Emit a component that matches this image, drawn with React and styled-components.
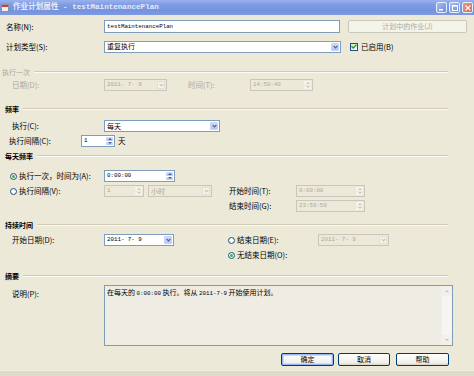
import React from 'react'
import styled, { createGlobalStyle, css } from 'styled-components'

const GlobalStyle = createGlobalStyle`
  html, body { margin: 0; padding: 0; }
  body {
    background: #ece9d8;
    font-family: "Noto Sans CJK SC", "Liberation Sans", sans-serif;
    font-size: 7.5px;
    line-height: 1;
    color: #000;
  }
`

const Window = styled.div`
  width: 474px;
  height: 376px;
  display: flex;
  flex-direction: column;
  overflow: hidden;
  background: #ece9d8;
`

const TitleBar = styled.div`
  height: 15px;
  flex: none;
  display: flex;
  align-items: center;
  background: linear-gradient(#9ab2ee 0%, #7f9de3 30%, #7593de 70%, #7e9ae0 100%);
`

const TitleText = styled.div`
  margin-left: 4px;
  font-family: "Liberation Mono", "Noto Sans CJK SC", monospace;
  font-weight: bold;
  font-size: 7.6px;
  color: #e4ebfa;
  white-space: pre;
`

const CaptionGroup = styled.div`
  margin-left: auto;
  margin-right: 1px;
  display: flex;
  gap: 2px;
`

const CaptionButton = styled.div`
  width: 11px;
  height: 11px;
  box-sizing: border-box;
  border: 1px solid #e8eefc;
  border-radius: 2px;
  display: flex;
  align-items: center;
  justify-content: center;
  background: ${p => p.$close
    ? 'linear-gradient(135deg, #e89a86, #d5684e)'
    : 'linear-gradient(135deg, #a6bdf3, #6b8ce0)'};
`

const Body = styled.div`
  flex: 1;
  display: flex;
  flex-direction: column;
  position: relative;
`

const Row = styled.div`
  display: flex;
  align-items: center;
  margin-top: ${p => p.$mt}px;
  height: ${p => p.$h || 12}px;
  ${p => p.$ml && css`padding-left: ${p.$ml}px;`}
`

const Label = styled.span`
  flex: none;
  width: ${p => p.$w}px;
  margin-left: ${p => p.$ml || 0}px;
  color: ${p => (p.$disabled ? '#aca899' : '#000')};
  white-space: nowrap;
  ${p => p.$top && css`align-self: flex-start; padding-top: 5px;`}
`

const Field = styled.div`
  flex: none;
  box-sizing: border-box;
  width: ${p => p.$w}px;
  height: ${p => p.$h || 12}px;
  margin-left: ${p => p.$ml || 0}px;
  border: 1px solid ${p => (p.$disabled ? '#c9c7ba' : '#7f9db9')};
  background: ${p => (p.$disabled ? '#ece9d8' : '#fff')};
  color: ${p => (p.$disabled ? '#aca899' : '#000')};
  display: flex;
  align-items: center;
  padding-left: 2px;
  font-size: 7px;
  white-space: nowrap;
  overflow: hidden;
`

const FieldText = styled.span`
  flex: 1;
  ${p => p.$mono && css`font-family: "Liberation Mono", monospace; font-size: 5.8px;`}
`

const ArrowButton = styled.div`
  flex: none;
  align-self: stretch;
  width: 8px;
  margin: 1px;
  border-radius: 1px;
  display: flex;
  align-items: center;
  justify-content: center;
  background: ${p => (p.$disabled ? '#f4f3ee' : 'linear-gradient(#d2ddfa, #b3c7f6)')};
  border: 1px solid ${p => (p.$disabled ? '#e2e0d6' : '#c3d3fd')};
  box-sizing: border-box;
`

const SpinButtons = styled.div`
  flex: none;
  align-self: stretch;
  width: 7px;
  margin: 1px;
  display: flex;
  flex-direction: column;
  gap: 1px;
`

const SpinHalf = styled.div`
  flex: 1;
  display: flex;
  align-items: center;
  justify-content: center;
  border-radius: 1px;
  background: ${p => (p.$disabled ? '#f4f3ee' : 'linear-gradient(#d2ddfa, #b3c7f6)')};
`

const Header = styled.div`
  display: flex;
  align-items: center;
  width: 448px;
  height: 10px;
  margin-top: ${p => p.$mt}px;
  padding-left: ${p => p.$pl || 5}px;
  box-sizing: border-box;
`

const HeaderText = styled.span`
  font-weight: ${p => (p.$disabled ? 'normal' : 'bold')};
  color: ${p => (p.$disabled ? '#aca899' : '#000')};
  font-size: 7px;
`

const Rule = styled.div`
  flex: 1;
  margin-left: 4px;
  height: 0;
  border-top: 1px solid #d0ccb8;
  border-bottom: 1px solid #fbfaf5;
`

const Check = styled.div`
  flex: none;
  width: 8px;
  height: 8px;
  margin-left: ${p => p.$ml || 0}px;
  box-sizing: border-box;
  border: 1px solid #1c5180;
  background: linear-gradient(135deg, #dcdcd6, #fff);
  display: flex;
  align-items: center;
  justify-content: center;
`

const RadioBox = styled.div`
  flex: none;
  width: ${p => p.$w}px;
  margin-left: ${p => p.$ml || 0}px;
  display: flex;
  align-items: center;
  gap: 2px;
  white-space: nowrap;
`

const RadioDot = styled.div`
  flex: none;
  width: 7px;
  height: 7px;
  border-radius: 50%;
  box-sizing: border-box;
  border: 1px solid #1c5180;
  background: radial-gradient(#fff 40%, #e2e1d9);
  display: flex;
  align-items: center;
  justify-content: center;
  &::after {
    content: "";
    display: ${p => (p.$checked ? 'block' : 'none')};
    width: 3px;
    height: 3px;
    border-radius: 50%;
    background: #3fb03a;
  }
`

const TextArea = styled.div`
  flex: none;
  box-sizing: border-box;
  width: 349px;
  height: 61px;
  border: 1px solid #7f9db9;
  background: #efede3;
  display: flex;
  font-size: 7px;
`

const AreaText = styled.div`
  flex: 1;
  padding: 3px 2px;
  white-space: nowrap;
`

const ScrollBar = styled.div`
  flex: none;
  width: 10px;
  display: flex;
  flex-direction: column;
  justify-content: space-between;
  background: #f6f5f0;
  border-left: 1px solid #f0efe9;
`

const ScrollArrow = styled.div`
  height: 10px;
  display: flex;
  align-items: center;
  justify-content: center;
  background: #f1f0ea;
`

const ButtonRow = styled.div`
  display: flex;
  align-items: center;
  margin-top: 7px;
  height: 13px;
  padding-left: 281px;
`

const Button = styled.div`
  flex: none;
  box-sizing: border-box;
  width: ${p => p.$w}px;
  height: ${p => p.$h || 13}px;
  margin-left: ${p => p.$ml || 0}px;
  display: flex;
  align-items: center;
  justify-content: center;
  border-radius: 2px;
  font-size: 7px;
  border: 1px solid ${p => (p.$disabled ? '#cac8bb' : '#003c74')};
  color: ${p => (p.$disabled ? '#aca899' : '#000')};
  background: ${p => (p.$disabled ? '#f5f4ea' : 'linear-gradient(#fff, #f1f0ea 80%, #d6d0c5)')};
  ${p => p.$default && css`box-shadow: inset 0 0 0 1px #99b8f3, inset 0 0 0 2px #cedcfa;`}
`

const StatusStrip = styled.div`
  margin-top: auto;
  height: 5px;
  background: #dedbcb;
  border-top: 1px solid #f2f0e6;
`

function Chevron({ disabled }) {
  return (
    <svg width="5" height="4" viewBox="0 0 5 4">
      <path d="M0.6 0.8 L2.5 2.8 L4.4 0.8" fill="none" stroke={disabled ? '#c9c7ba' : '#4d6185'} strokeWidth="1.2" />
    </svg>
  )
}

function Tri({ up, disabled }) {
  return (
    <svg width="4" height="2" viewBox="0 0 4 2">
      <path d={up ? 'M0 2 L2 0 L4 2 Z' : 'M0 0 L2 2 L4 0 Z'} fill={disabled ? '#c9c7ba' : '#4d6185'} />
    </svg>
  )
}

function Combo({ w, ml, disabled, value, mono }) {
  return (
    <Field $w={w} $ml={ml} $disabled={disabled}>
      <FieldText $mono={mono}>{value}</FieldText>
      <ArrowButton $disabled={disabled}><Chevron disabled={disabled} /></ArrowButton>
    </Field>
  )
}

function Spin({ w, ml, disabled, value, mono }) {
  return (
    <Field $w={w} $ml={ml} $disabled={disabled}>
      <FieldText $mono={mono}>{value}</FieldText>
      <SpinButtons>
        <SpinHalf $disabled={disabled}><Tri up disabled={disabled} /></SpinHalf>
        <SpinHalf $disabled={disabled}><Tri disabled={disabled} /></SpinHalf>
      </SpinButtons>
    </Field>
  )
}

function Radio({ w, ml, checked, children }) {
  return (
    <RadioBox $w={w} $ml={ml}>
      <RadioDot $checked={checked} />
      <span>{children}</span>
    </RadioBox>
  )
}

function Section({ mt, pl, disabled, title }) {
  return (
    <Header $mt={mt} $pl={pl}>
      <HeaderText $disabled={disabled}>{title}</HeaderText>
      <Rule />
    </Header>
  )
}

function AppIcon() {
  return (
    <svg width="8" height="8" viewBox="0 0 8 8" style={{ marginLeft: 1 }}>
      <rect x="0.5" y="0.5" width="7" height="7" fill="#f3f1e8" stroke="#8b8fa6" />
      <rect x="1" y="1" width="6" height="2" fill="#c0462f" />
    </svg>
  )
}

export default function App() {
  return (
    <Window>
      <GlobalStyle />
      <TitleBar>
        <AppIcon />
        <TitleText>作业计划属性 - testMaintenancePlan</TitleText>
        <CaptionGroup>
          <CaptionButton>
            <svg width="5" height="6" viewBox="0 0 5 6"><rect x="0" y="4" width="4" height="1.5" fill="#fff" /></svg>
          </CaptionButton>
          <CaptionButton>
            <svg width="6" height="6" viewBox="0 0 6 6"><rect x="0.5" y="0.5" width="5" height="5" fill="none" stroke="#fff" /><rect x="0" y="0" width="6" height="1.6" fill="#fff" /></svg>
          </CaptionButton>
          <CaptionButton $close>
            <svg width="6" height="6" viewBox="0 0 6 6"><path d="M0.6 0.6 L5.4 5.4 M5.4 0.6 L0.6 5.4" stroke="#fff" strokeWidth="1.3" /></svg>
          </CaptionButton>
        </CaptionGroup>
      </TitleBar>

      <Body>
        <Row $mt={5} $h={13}>
          <Label $ml={6} $w={98}>名称(N):</Label>
          <Field $w={236} $h={13}><FieldText $mono>testMaintenancePlan</FieldText></Field>
          <Button $w={119} $ml={8} $disabled>计划中的作业(J)</Button>
        </Row>

        <Row $mt={7} $h={13}>
          <Label $ml={6} $w={98}>计划类型(S):</Label>
          <Combo w={237} value="重复执行" />
          <Check $ml={9}>
            <svg width="6" height="5" viewBox="0 0 6 5"><path d="M0.5 2.3 L2.2 4 L5.5 0.7" fill="none" stroke="#21a121" strokeWidth="1.3" /></svg>
          </Check>
          <Label $ml={3}>已启用(B)</Label>
        </Row>

        <Section mt={14} pl={2} disabled title="执行一次" />

        <Row $mt={2}>
          <Label $ml={12} $w={92} $disabled>日期(D):</Label>
          <Combo w={63} disabled mono value="2011- 7- 9" />
          <Label $ml={21} $w={62} $disabled>时间(T):</Label>
          <Spin w={63} disabled mono value="14:50:40" />
        </Row>

        <Section mt={13} title="频率" />

        <Row $mt={6}>
          <Label $ml={12} $w={92}>执行(C):</Label>
          <Combo w={116} value="每天" />
        </Row>

        <Row $mt={3}>
          <Label $ml={9} $w={72}>执行间隔(C):</Label>
          <Spin w={34} mono value="1" />
          <Label $ml={3}>天</Label>
        </Row>

        <Section mt={4} title="每天频率" />

        <Row $mt={9}>
          <Radio ml={10} w={94} checked>执行一次，时间为(A):</Radio>
          <Spin w={71} mono value="0:00:00" />
        </Row>

        <Row $mt={3}>
          <Radio ml={10} w={94}>执行间隔(V):</Radio>
          <Spin w={40} disabled mono value="1" />
          <Combo w={64} ml={4} disabled value="小时" />
          <Label $ml={17} $w={67}>开始时间(T):</Label>
          <Spin w={69} disabled mono value="0:00:00" />
        </Row>

        <Row $mt={3} $ml={229}>
          <Label $w={67}>结束时间(G):</Label>
          <Spin w={69} disabled mono value="23:59:59" />
        </Row>

        <Section mt={8} title="持续时间" />

        <Row $mt={4}>
          <Label $ml={12} $w={92}>开始日期(D):</Label>
          <Combo w={70} mono value="2011- 7- 9" />
          <Radio ml={54} w={90}>结束日期(E):</Radio>
          <Combo w={71} disabled mono value="2011- 7- 9" />
        </Row>

        <Row $mt={3}>
          <Radio ml={228} w={90} checked>无结束日期(O):</Radio>
        </Row>

        <Section mt={10} title="摘要" />

        <Row $mt={4} $h={61}>
          <Label $ml={12} $w={92} $top>说明(P):</Label>
          <TextArea>
            <AreaText>在每天的 <FieldText $mono>0:00:00</FieldText> 执行。将从 <FieldText $mono>2011-7-9</FieldText> 开始使用计划。</AreaText>
            <ScrollBar>
              <ScrollArrow><Tri up disabled /></ScrollArrow>
              <ScrollArrow><Tri disabled /></ScrollArrow>
            </ScrollBar>
          </TextArea>
        </Row>

        <ButtonRow>
          <Button $w={53} $default>确定</Button>
          <Button $w={52} $ml={4}>取消</Button>
          <Button $w={53} $ml={6}>帮助</Button>
        </ButtonRow>

        <StatusStrip />
      </Body>
    </Window>
  )
}
